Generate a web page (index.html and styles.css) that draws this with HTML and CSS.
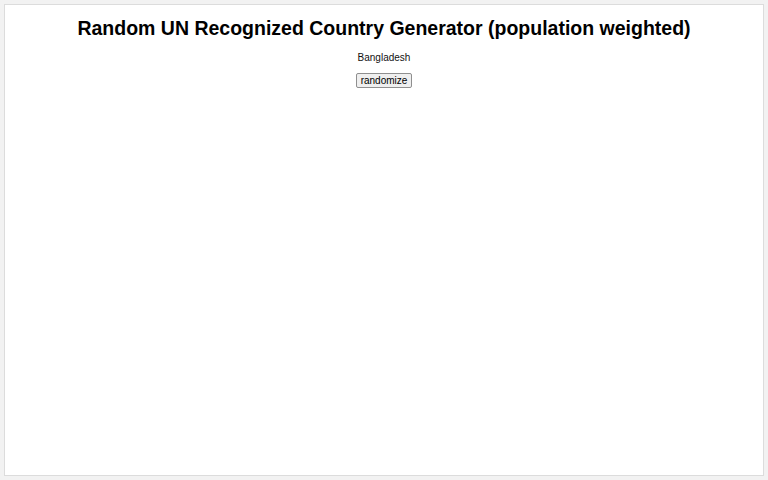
FILE: index.html
```html
<!DOCTYPE html>
<html>
<head>
<meta charset="utf-8">
<link rel="stylesheet" href="styles.css">
</head>
<body>
<div class="card">
  <h1 class="title">Random UN Recognized Country Generator (population weighted)</h1>
  <p class="result">Bangladesh</p>
  <button class="btn">randomize</button>
</div>
</body>
</html>
```
FILE: styles.css
```css
html, body {
  margin: 0;
  padding: 0;
}
body {
  background: #f2f2f2;
  padding: 4px;
  font-family: "Liberation Sans", Arial, sans-serif;
}
.card {
  box-sizing: border-box;
  width: 760px;
  height: 472px;
  background: #fff;
  border: 1px solid #dcdcdc;
  display: flex;
  flex-direction: column;
  align-items: center;
  padding-top: 11px;
}
.title {
  margin: 0;
  font-size: 19.5px;
  font-weight: bold;
  color: #000;
  line-height: 24px;
}
.result {
  margin: 12px 0 0 0;
  font-size: 10px;
  line-height: 12px;
  color: #111;
}
.btn {
  margin-top: 9px;
  font-family: "Liberation Sans", Arial, sans-serif;
  font-size: 10px;
  padding: 1px 4px;
  background: #efefef;
  border: 1px solid #8f8f8f;
  border-radius: 2px;
  color: #000;
}
```
